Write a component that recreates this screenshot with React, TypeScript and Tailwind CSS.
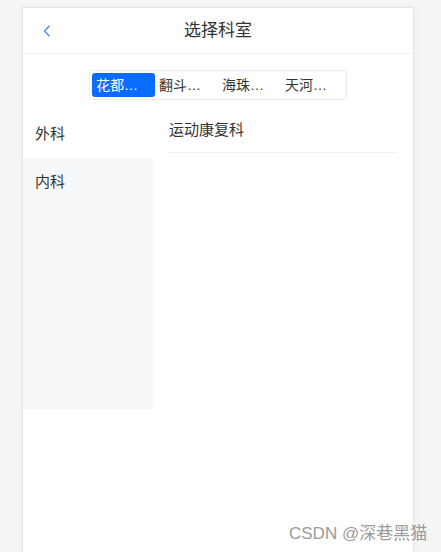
import { useState } from "react";

const CAMPUSES = ["花都院区", "翻斗院区", "海珠院区", "天河院区"];

const DEPARTMENTS = [
  { name: "外科", children: ["运动康复科"] },
  { name: "内科", children: ["心血管内科", "消化内科"] },
];

export default function App() {
  const [campus, setCampus] = useState(0);
  const [dept, setDept] = useState(0);

  return (
    <div
      className="min-h-screen bg-[#f4f5f5] pl-[22px] pt-[7px] text-[#333]"
      style={{ fontFamily: '"Liberation Sans", "Noto Sans CJK SC", sans-serif' }}
    >
      <div className="relative flex min-h-[545px] w-[392px] flex-col border border-b-0 border-[#e3e4e4] bg-white shadow-[0_0_8px_rgba(0,0,0,0.04)]">
        {/* header */}
        <div className="relative flex h-[46px] items-center justify-center border-b border-[#f2f2f2]">
          <button className="absolute left-[20px] top-[17px] flex h-[12px] w-[10px] items-center">
            <svg width="8" height="12" viewBox="0 0 8 12" fill="none">
              <path d="M6.5 0.8 L1.5 6 L6.5 11.2" stroke="#4b87f6" strokeWidth="1.3" />
            </svg>
          </button>
          <h1 className="text-[17px] leading-none">选择科室</h1>
        </div>

        {/* campus tabs */}
        <div className="mt-[16px] flex justify-center">
          <div className="flex rounded-[3px] border border-[#ececec] p-[2px]">
            {CAMPUSES.map((c, i) => (
              <button
                key={c}
                onClick={() => setCampus(i)}
                className={
                  i === campus
                    ? "h-[24px] w-[63px] truncate rounded-[3px] bg-[#0a6dff] px-[4px] text-left text-[14px] leading-[24px] text-white"
                    : "h-[24px] w-[63px] truncate rounded-[3px] px-[4px] text-left text-[14px] leading-[24px] text-[#333]"
                }
              >
                {c}
              </button>
            ))}
          </div>
        </div>

        {/* departments */}
        <div className="mt-[10px] flex">
          <div className="h-[299px] w-[130px] bg-[#f7f8fa]">
            {DEPARTMENTS.map((d, i) => (
              <div
                key={d.name}
                onClick={() => setDept(i)}
                className={
                  i === dept
                    ? "flex h-[48px] items-center bg-white pl-[12px] text-[15px]"
                    : "flex h-[48px] items-center pl-[12px] text-[15px]"
                }
              >
                {d.name}
              </div>
            ))}
          </div>
          <div className="flex-1 pl-[16px] pr-[15px]">
            {DEPARTMENTS[dept].children.slice(0, 1).map((c) => (
              <div
                key={c}
                className="flex h-[43px] items-center border-b border-[#f0f0f0] pb-[2px] text-[15px]"
              >
                {c}
              </div>
            ))}
          </div>
        </div>
      </div>

      <div className="pointer-events-none absolute left-[289px] top-[521px] text-[17px] text-[#9a9a9a]">
        CSDN @深巷黑猫
      </div>
    </div>
  );
}
